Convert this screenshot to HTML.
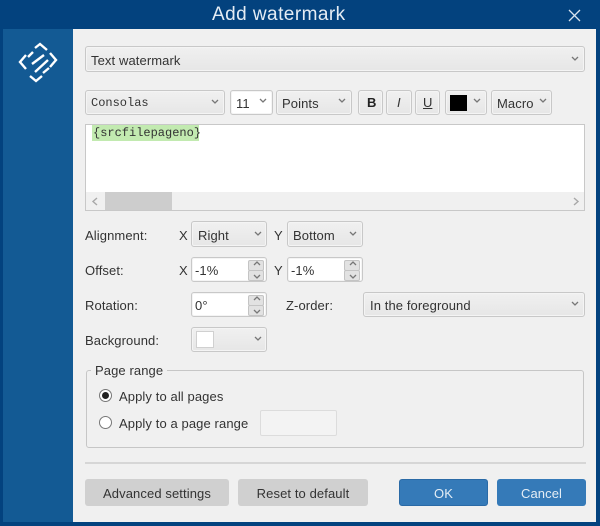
<!DOCTYPE html>
<html><head><meta charset="utf-8">
<style>
html,body{margin:0;padding:0;width:600px;height:526px;overflow:hidden}
html{background:#03427e}
body{position:relative;font-family:"Liberation Sans",sans-serif;font-size:13px;color:#333;background:#03427e;filter:blur(.3px)}
.a{position:absolute;box-sizing:border-box}
.t{position:absolute;white-space:nowrap;letter-spacing:.1px;line-height:16px}
.c{position:absolute;box-sizing:border-box;border:1px solid #c8c8c8;border-radius:3px;background:linear-gradient(#f0f0f0,#e6e6e6);box-shadow:inset 0 0 0 1px #f4f4f4}
.c span.l{position:absolute;left:5px;top:5px;white-space:nowrap;letter-spacing:.1px;line-height:16px}
.btn{position:absolute;box-sizing:border-box;border-radius:3px;text-align:center;line-height:29px;letter-spacing:.1px;height:27px;top:479px}
svg{position:absolute;overflow:visible}
.ch{fill:none;stroke:#777;stroke-width:1.3}
.sp{position:absolute;box-sizing:border-box;width:16px;height:11px;background:#e2e2e2;border:1px solid #c4c4c4;border-radius:2px}
</style></head><body>
<div class="a" style="left:3px;top:29px;width:70px;height:493px;background:#135a94"></div>
<div class="a" style="left:73px;top:29px;width:523px;height:493px;background:#f0f0f0"></div>
<div class="t" style="left:212px;top:4px;font-size:19px;line-height:22px;color:#e4ecf4;letter-spacing:.45px">Add watermark</div>
<svg style="left:0;top:0" width="600" height="30"><path d="M569 10L580 21M580 10L569 21" stroke="#d8e3ee" stroke-width="1.3" fill="none"/></svg>
<svg style="left:0;top:0" width="73" height="100"><g fill="none" stroke="#fff" stroke-width="2.4">
<path d="M35 48L40 44L47 50"/><path d="M26 55L20 62L26 69"/><path d="M50 53L56 60L50 67"/><path d="M30 76L36 81L42 76"/>
<path d="M28 57L33 52"/><path d="M32 64L44 55"/><path d="M35 72L48 60"/><path d="M43 73L49 68"/></g></svg>

<div class="c" style="left:85px;top:46px;width:500px;height:26px"><span class="l" style="top:6px">Text watermark</span></div>
<svg style="left:0;top:0;z-index:2" width="600" height="70"><g class="ch"><path d="M572 57L575 60L578 57"/></g></svg>

<div class="c" style="left:85px;top:90px;width:140px;height:25px"><span class="l" style="font-family:'Liberation Mono',monospace;font-size:12px;letter-spacing:0;top:4px">Consolas</span></div>
<div class="c" style="left:230px;top:90px;width:43px;height:25px;background:#fff"><span class="l">11</span></div>
<div class="c" style="left:276px;top:90px;width:76px;height:25px"><span class="l">Points</span></div>
<div class="c" style="left:358px;top:90px;width:25px;height:25px"><span class="l" style="left:8px;top:4px;font-weight:bold;color:#222;letter-spacing:0">B</span></div>
<div class="c" style="left:386px;top:90px;width:26px;height:25px"><span class="l" style="left:10px;top:4px;font-style:italic;letter-spacing:0">I</span></div>
<div class="c" style="left:415px;top:90px;width:25px;height:25px"><span class="l" style="left:7px;top:4px;text-decoration:underline;letter-spacing:0">U</span></div>
<div class="c" style="left:445px;top:90px;width:42px;height:25px"><div class="a" style="left:4px;top:4px;width:17px;height:16px;background:#000"></div></div>
<div class="c" style="left:491px;top:90px;width:61px;height:25px"><span class="l">Macro</span></div>
<svg style="left:0;top:0;z-index:2" width="600" height="130"><g class="ch"><path d="M260 99L263 102L266 99"/><path d="M339 99L342 102L345 99"/><path d="M474 99L477 102L480 99"/><path d="M540 99L543 102L546 99"/><path d="M212 100L215 103L218 100"/></g></svg>

<div class="a" style="left:85px;top:124px;width:500px;height:87px;background:#fff;border:1px solid #c8c8c8"></div>
<div class="a" style="left:92px;top:125px;width:107px;height:16px;background:#c2eab0"></div>
<div class="t" style="left:93px;top:125px;font-family:'Liberation Mono',monospace;font-size:12px;letter-spacing:0;line-height:16px;text-rendering:geometricPrecision">{srcfilepageno}</div>
<div class="a" style="left:86px;top:192px;width:498px;height:18px;background:#f0f0f0"></div>
<div class="a" style="left:105px;top:192px;width:67px;height:18px;background:#cdcdcd"></div>
<svg style="left:0;top:0" width="600" height="215"><path d="M97 198L93 201.500L97 205M574 198L578 201.500L574 205" fill="none" stroke="#a8a8a8" stroke-width="1.4"/></svg>

<div class="t" style="left:85px;top:228px">Alignment:</div>
<div class="t" style="left:179px;top:228px">X</div>
<div class="c" style="left:191px;top:221px;width:76px;height:26px"><span class="l" style="left:6px;top:6px">Right</span></div>
<div class="t" style="left:274px;top:228px">Y</div>
<div class="c" style="left:287px;top:221px;width:76px;height:26px"><span class="l" style="top:6px">Bottom</span></div>

<div class="t" style="left:85px;top:263px">Offset:</div>
<div class="t" style="left:179px;top:263px">X</div>
<div class="c" style="left:191px;top:257px;width:76px;height:25px;background:#fff"><span class="l" style="left:3px;top:5px">-1%</span><div class="sp" style="left:56px;top:2px"></div><div class="sp" style="left:56px;top:12px"></div></div>
<div class="t" style="left:274px;top:263px">Y</div>
<div class="c" style="left:287px;top:257px;width:76px;height:25px;background:#fff"><span class="l" style="left:3px;top:5px">-1%</span><div class="sp" style="left:56px;top:2px"></div><div class="sp" style="left:56px;top:12px"></div></div>

<div class="t" style="left:85px;top:298px">Rotation:</div>
<div class="c" style="left:191px;top:292px;width:76px;height:25px;background:#fff"><span class="l" style="left:3px;top:5px">0°</span><div class="sp" style="left:56px;top:2px"></div><div class="sp" style="left:56px;top:12px"></div></div>
<div class="t" style="left:286px;top:298px">Z-order:</div>
<div class="c" style="left:363px;top:292px;width:222px;height:25px"><span class="l" style="left:6px">In the foreground</span></div>

<div class="t" style="left:85px;top:333px">Background:</div>
<div class="c" style="left:191px;top:327px;width:76px;height:25px"><div class="a" style="left:4px;top:3px;width:18px;height:17px;background:#fff;border:1px solid #d0d0d0"></div></div>

<svg style="left:0;top:0;z-index:2" width="600" height="360"><g class="ch"><path d="M255 232L258 235L261 232"/><path d="M350 232L353 235L356 232"/><path d="M572 302L575 305L578 302"/><path d="M255 337L258 340L261 337"/>
<path d="M254 265L257 262L260 265M254 275L257 278L260 275M350 265L353 262L356 265M350 275L353 278L356 275M254 300L257 297L260 300M254 310L257 313L260 310"/></g></svg>

<div class="a" style="left:86px;top:370px;width:498px;height:78px;border:1px solid #c6c6c6;border-radius:3px"></div>
<div class="t" style="left:91px;top:363px;background:#f0f0f0;padding:0 4px">Page range</div>
<div class="a" style="left:99px;top:389px;width:13px;height:13px;border-radius:50%;background:#fff;border:1px solid #777"></div>
<div class="a" style="left:102px;top:392px;width:7px;height:7px;border-radius:50%;background:#222"></div>
<div class="t" style="left:119px;top:389px">Apply to all pages</div>
<div class="a" style="left:99px;top:416px;width:13px;height:13px;border-radius:50%;background:#fff;border:1px solid #777"></div>
<div class="t" style="left:119px;top:416px">Apply to a page range</div>
<div class="a" style="left:260px;top:410px;width:77px;height:26px;background:#f3f3f3;border:1px solid #dcdcdc;border-radius:2px"></div>

<div class="a" style="left:85px;top:462px;width:501px;height:2px;background:#d6d6d6"></div>
<div class="btn" style="left:85px;width:144px;background:#d0d0d0">Advanced settings</div>
<div class="btn" style="left:238px;width:130px;background:#d0d0d0">Reset to default</div>
<div class="btn" style="left:399px;width:89px;background:#357ab8;color:#e4edf5;border:1px solid #2a6aa6;line-height:27px">OK</div>
<div class="btn" style="left:497px;width:89px;background:#357ab8;color:#e4edf5">Cancel</div>
</body></html>
